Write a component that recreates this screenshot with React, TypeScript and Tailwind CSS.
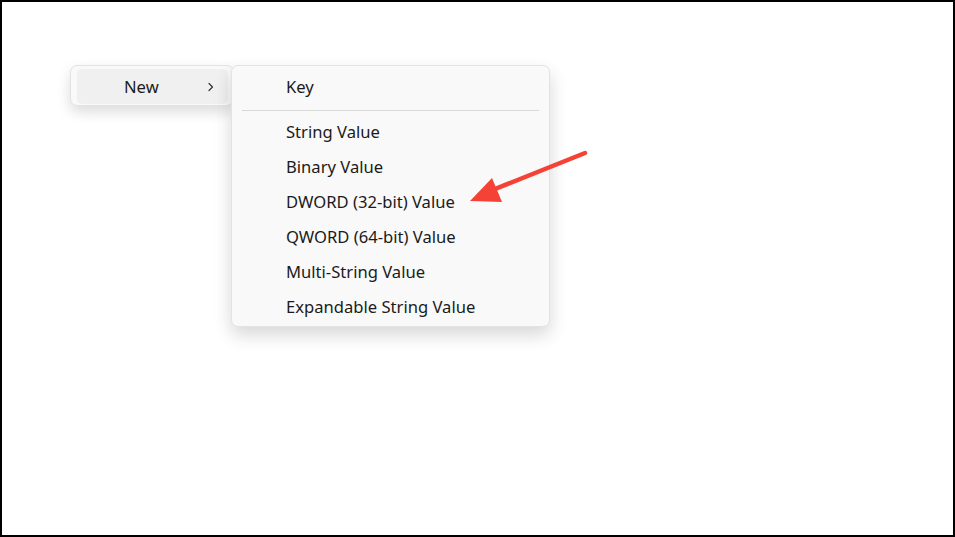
import React from "react";

const items = [
  "String Value",
  "Binary Value",
  "DWORD (32-bit) Value",
  "QWORD (64-bit) Value",
  "Multi-String Value",
  "Expandable String Value",
];

export default function App() {
  return (
    <div
      className="relative w-[955px] h-[537px] bg-white border-2 border-black overflow-hidden text-[#1b1b1b]"
      style={{ fontFamily: '"Segoe UI", "Noto Sans", "Open Sans", sans-serif' }}
    >
      <div className="flex items-start pt-[63px] pl-[68px]">
        <div className="w-[164px] h-[41px] rounded-[7px] border border-[#e3e3e3] bg-[#f9f9f9] shadow-[0_6px_14px_rgba(0,0,0,0.14)] pl-[6px] pr-[5px] pt-[3px]">
          <div className="flex h-[35px] items-center rounded-[5px] bg-[#f0f0f0] pl-[47px] pr-[12px] pt-[2px]">
            <span className="text-[16.6px] leading-none">New</span>
            <svg className="ml-auto -mt-[2px]" width="10" height="10" viewBox="0 0 10 10">
              <path d="M3 1.5 L6.5 5 L3 8.5" fill="none" stroke="#333" strokeWidth="1.2" strokeLinecap="round" strokeLinejoin="round" />
            </svg>
          </div>
        </div>
        <div className="relative z-10 -ml-[3px] w-[319px] h-[262px] rounded-[7px] border border-[#e3e3e3] bg-[#f9f9f9] shadow-[0_8px_18px_rgba(0,0,0,0.16)] pt-[4px]">
          <div className="flex h-[35px] items-center pl-[54px] text-[16.6px]">Key</div>
          <div className="flex h-[10px] items-center px-[10px]">
            <div className="h-px w-full bg-[#d9d9d9]" />
          </div>
          {items.map((t) => (
            <div key={t} className="flex h-[35px] items-center pl-[54px] text-[16.6px]">
              {t}
            </div>
          ))}
        </div>
      </div>
      <svg className="absolute left-0 top-0 z-20 pointer-events-none" width="955" height="537" viewBox="0 0 955 537">
        <line x1="583" y1="151" x2="488" y2="189" stroke="#f44336" strokeWidth="4.5" strokeLinecap="round" />
        <polygon points="468,199 490,176 500,200" fill="#f44336" />
      </svg>
    </div>
  );
}
